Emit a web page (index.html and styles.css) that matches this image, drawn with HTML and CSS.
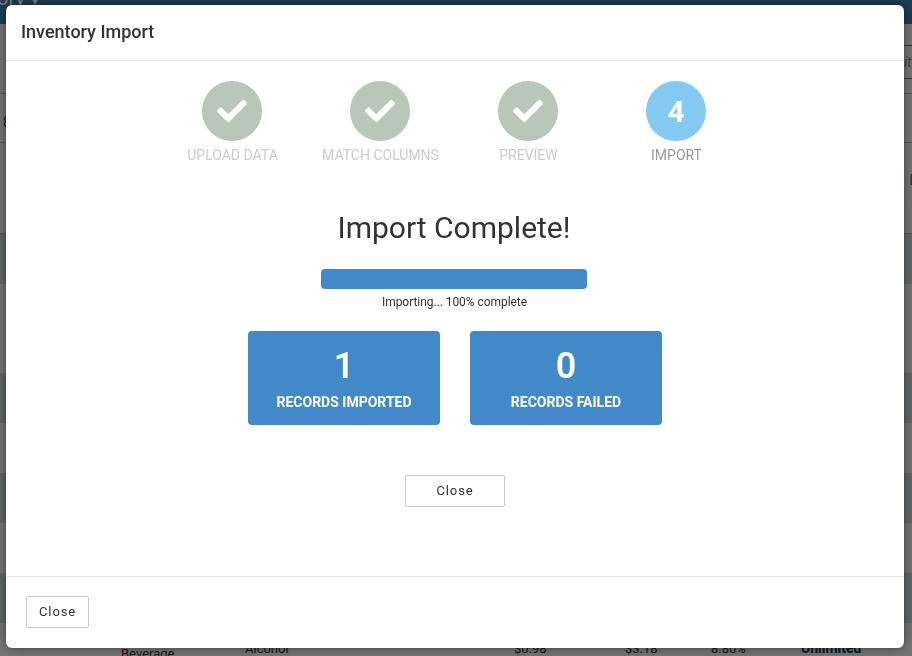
FILE: index.html
```html
<!DOCTYPE html>
<html lang="en">
<head>
  <meta charset="UTF-8">
  <title>Inventory Import</title>
  <link rel="stylesheet" href="styles.css">
</head>
<body>
  <div class="page">
    <div class="topbar"><span class="topbar-title">Inventory ▾</span></div>
    <div class="page-row row-title">
      <span class="page-heading">Inventory</span>
      <span class="filter-box">items</span>
    </div>
    <div class="page-row row-a"><span class="side-text">8</span></div>
    <div class="page-row row-b"><span class="side-mark">I</span><span class="side-dash">—</span></div>
    <div class="band"></div>
    <div class="band band-tall"></div>
    <div class="band"></div>
    <div class="band band-light"></div>
    <div class="band"></div>
    <div class="band band-light"></div>
    <div class="band"></div>
    <div class="table-row">
      <span class="cell cell-low">Beverage</span>
      <span class="cell">Alcohol</span>
      <span class="cell">$0.98</span>
      <span class="cell">$3.18</span>
      <span class="cell">8.80%</span>
      <span class="cell cell-stock">Unlimited</span>
    </div>
  </div>
  <div class="backdrop"></div>
  <div class="modal">
    <div class="modal-header">Inventory Import</div>
    <div class="modal-body">
      <div class="steps">
        <div class="step done">
          <div class="step-circle">
            <svg class="check" viewBox="0 0 512 512"><path d="M173.898 439.404l-166.4-166.4c-9.997-9.997-9.997-26.206 0-36.204l36.203-36.204c9.997-9.998 26.207-9.998 36.204 0L192 312.69 432.095 72.596c9.997-9.997 26.207-9.997 36.204 0l36.203 36.204c9.997 9.997 9.997 26.206 0 36.204l-294.4 294.401c-9.998 9.997-26.207 9.997-36.204-.001z"/></svg>
          </div>
          <div class="step-label">UPLOAD DATA</div>
        </div>
        <div class="step done">
          <div class="step-circle">
            <svg class="check" viewBox="0 0 512 512"><path d="M173.898 439.404l-166.4-166.4c-9.997-9.997-9.997-26.206 0-36.204l36.203-36.204c9.997-9.998 26.207-9.998 36.204 0L192 312.69 432.095 72.596c9.997-9.997 26.207-9.997 36.204 0l36.203 36.204c9.997 9.997 9.997 26.206 0 36.204l-294.4 294.401c-9.998 9.997-26.207 9.997-36.204-.001z"/></svg>
          </div>
          <div class="step-label">MATCH COLUMNS</div>
        </div>
        <div class="step done">
          <div class="step-circle">
            <svg class="check" viewBox="0 0 512 512"><path d="M173.898 439.404l-166.4-166.4c-9.997-9.997-9.997-26.206 0-36.204l36.203-36.204c9.997-9.998 26.207-9.998 36.204 0L192 312.69 432.095 72.596c9.997-9.997 26.207-9.997 36.204 0l36.203 36.204c9.997 9.997 9.997 26.206 0 36.204l-294.4 294.401c-9.998 9.997-26.207 9.997-36.204-.001z"/></svg>
          </div>
          <div class="step-label">PREVIEW</div>
        </div>
        <div class="step active">
          <div class="step-circle">4</div>
          <div class="step-label">IMPORT</div>
        </div>
      </div>
      <h1 class="complete-title">Import Complete!</h1>
      <div class="progress"></div>
      <div class="progress-text">Importing... 100% complete</div>
      <div class="stats">
        <div class="stat">
          <div class="stat-number">1</div>
          <div class="stat-label">RECORDS IMPORTED</div>
        </div>
        <div class="stat">
          <div class="stat-number">0</div>
          <div class="stat-label">RECORDS FAILED</div>
        </div>
      </div>
      <button class="btn btn-wide">Close</button>
    </div>
    <div class="modal-footer">
      <button class="btn">Close</button>
    </div>
  </div>
</body>
</html>
```

FILE: styles.css
```css
html, body {
  margin: 0;
  height: 100%;
  overflow: hidden;
}

body {
  font-family: Roboto, "Liberation Sans", sans-serif;
  color: #333;
  background: #fff;
}

/* page behind the modal */
.page {
  height: 656px;
  overflow: hidden;
  display: flex;
  flex-direction: column;
  background: #ececec;
}

.topbar {
  height: 24px;
  flex: none;
  background: #3c7aa6;
  overflow: hidden;
}

.topbar-title {
  display: block;
  margin-top: -14px;
  margin-left: -57px;
  font-size: 20px;
  color: #fff;
}

.page-row {
  flex: none;
  border-bottom: 1px solid #a8a8a8;
  box-sizing: border-box;
}

.row-title {
  height: 70px;
  padding-top: 7px;
  display: flex;
  justify-content: space-between;
  align-items: center;
}

.page-heading {
  margin-left: -84px;
  margin-bottom: 7px;
  font-size: 20px;
  color: #222;
}

.filter-box {
  width: 60px;
  margin-right: -52px;
  padding: 8px 0 8px 1px;
  border-top: 1px solid #3c7aa6;
  border-bottom: 1px solid #3c7aa6;
  font-style: italic;
  font-size: 14px;
  line-height: 16px;
  color: #888;
}

.row-a {
  height: 49px;
  padding: 20px 0 0 3px;
  font-size: 14px;
  line-height: 16px;
  color: #345;
}

.row-b {
  height: 91px;
  display: flex;
  flex-direction: column;
  align-items: flex-end;
  padding-top: 29px;
  font-size: 14px;
  line-height: 16px;
  color: #755;
}

.side-mark {
  margin-right: -1px;
}

.side-dash {
  margin-right: -10px;
  margin-top: 6px;
  color: #333;
}

.band {
  flex: none;
  height: 50px;
  background: #c8d0d6;
}

.band-light {
  background: #ececec;
}

.band-tall {
  height: 89px;
  background: #ececec;
}

.table-row {
  flex: 1;
  display: grid;
  grid-template-columns: 124px 269px 111px 86px 90px 1fr;
  align-items: start;
  padding: 18px 0 0 121px;
  font-size: 13px;
  line-height: 15px;
  color: #333;
}

.cell-low {
  margin-top: 5px;
}

.cell-stock {
  font-weight: 700;
  font-size: 14px;
  color: #235;
}

.backdrop {
  position: fixed;
  inset: 0;
  background: rgba(0, 0, 0, 0.5);
}

/* modal */
.modal {
  position: fixed;
  left: 6px;
  top: 5px;
  width: 898px;
  height: 643px;
  display: flex;
  flex-direction: column;
  background: #fff;
  border-radius: 6px;
  box-shadow: 0 0 12px rgba(0, 0, 0, 0.5);
}

.modal-header {
  height: 56px;
  box-sizing: border-box;
  padding: 16px 15px 0;
  font-size: 18px;
  font-weight: 500;
  line-height: 22px;
  color: #333;
  border-bottom: 1px solid #e5e5e5;
  flex: none;
}

.modal-body {
  flex: 1;
  display: flex;
  flex-direction: column;
  align-items: center;
}

.steps {
  display: flex;
  gap: 28px;
  margin: 20px 2px 0 0;
}

.step {
  width: 120px;
  display: flex;
  flex-direction: column;
  align-items: center;
}

.step-circle {
  width: 60px;
  height: 60px;
  border-radius: 50%;
  display: flex;
  align-items: center;
  justify-content: center;
  color: #fff;
  font-size: 30px;
  font-weight: 700;
}

.done .step-circle {
  background: #b8c7b9;
}

.active .step-circle {
  background: #83c9f2;
}

.check {
  width: 30px;
  height: 30px;
  fill: #fff;
}

.step-label {
  margin-top: 6px;
  padding-left: 1px;
  font-size: 14px;
  line-height: 16px;
  white-space: nowrap;
  color: #ccc;
}

.active .step-label {
  color: #999;
}

.complete-title {
  margin: 46px 2px 0 0;
  font-size: 30px;
  font-weight: 400;
  line-height: 38px;
  color: #333;
}

.progress {
  width: 266px;
  height: 20px;
  margin: 22px 2px 0 0;
  background: #4289c9;
  border-radius: 4px;
}

.progress-text {
  margin: 5px 1px 0 0;
  font-size: 12px;
  line-height: 16px;
  letter-spacing: -0.05px;
  color: #333;
}

.stats {
  display: flex;
  gap: 30px;
  margin-top: 21px;
}

.stat {
  width: 192px;
  height: 94px;
  background: #4289c9;
  border-radius: 4px;
  color: #fff;
  text-align: center;
}

.stat-number {
  margin-top: 14px;
  font-size: 36px;
  font-weight: 600;
  line-height: 42px;
}

.stat-label {
  margin-top: 7px;
  font-size: 14px;
  font-weight: 700;
  line-height: 16px;
}

.btn {
  height: 32px;
  padding: 0 12px 2px;
  font-family: inherit;
  font-size: 13px;
  letter-spacing: 0.9px;
  color: #333;
  background: #fff;
  border: 1px solid #ccc;
  border-radius: 2px;
}

.btn-wide {
  width: 100px;
  margin-top: 50px;
}

.modal-footer {
  height: 72px;
  box-sizing: border-box;
  flex: none;
  padding: 19px 20px 0;
  border-top: 1px solid #e5e5e5;
}
```
